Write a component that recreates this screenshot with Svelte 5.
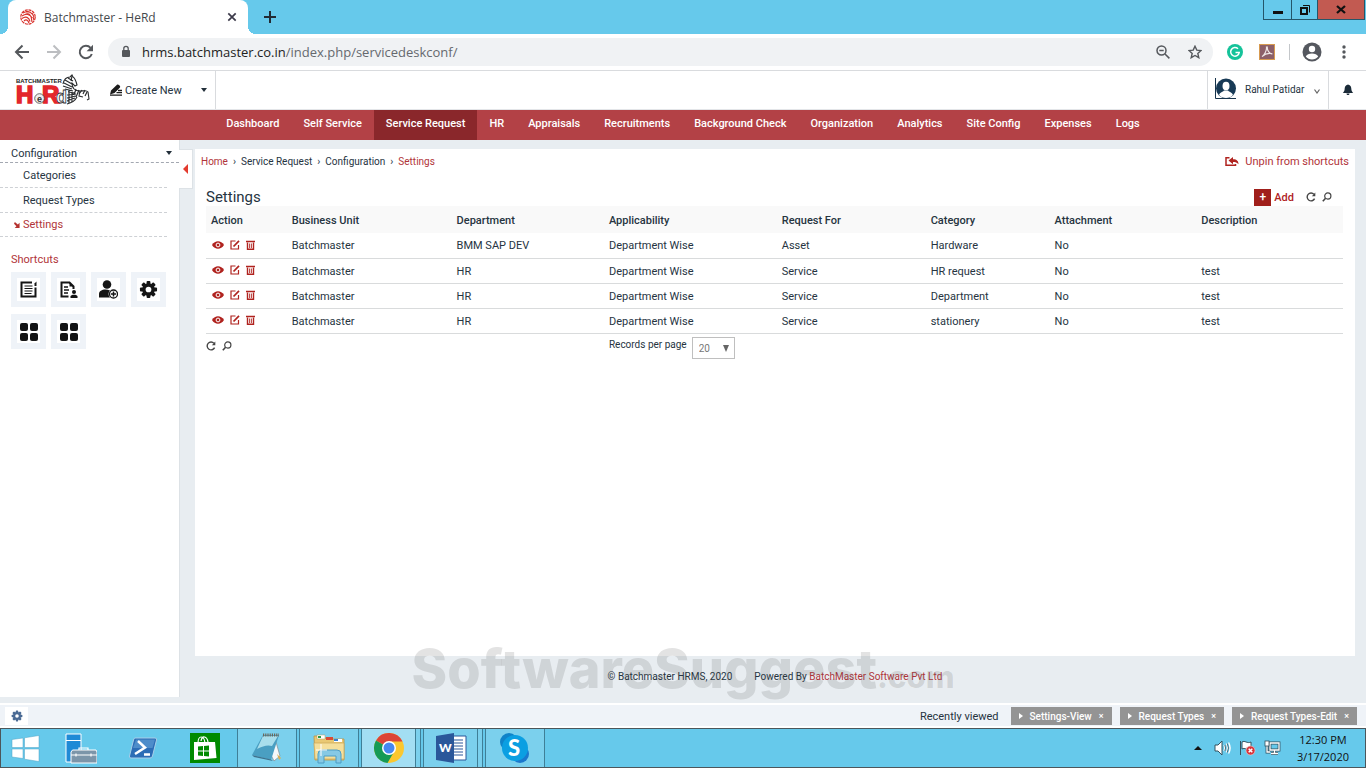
<script>
  let perPage = $state('20');

  const windowButtons = ['minimize', 'restore', 'close'];

  const navItems = [
    'Dashboard', 'Self Service', 'Service Request', 'HR', 'Appraisals', 'Recruitments',
    'Background Check', 'Organization', 'Analytics', 'Site Config', 'Expenses', 'Logs'
  ];

  const menuItems = ['Categories', 'Request Types', 'Settings'];

  const shortcuts = [
    { name: 'My request', icon: 'form' },
    { name: 'Employee report', icon: 'report' },
    { name: 'Add employee', icon: 'user' },
    { name: 'Configuration', icon: 'gear' },
    { name: 'Categories', icon: 'grid' },
    { name: 'Settings', icon: 'grid' }
  ];

  const columns = [
    { title: 'Action', width: 7.1 },
    { title: 'Business Unit', width: 14.5 },
    { title: 'Department', width: 13.4 },
    { title: 'Applicability', width: 15.2 },
    { title: 'Request For', width: 13.1 },
    { title: 'Category', width: 10.9 },
    { title: 'Attachment', width: 12.9 },
    { title: 'Description', width: 12.9 }
  ];

  const rows = [
    ['Batchmaster', 'BMM SAP DEV', 'Department Wise', 'Asset', 'Hardware', 'No', ''],
    ['Batchmaster', 'HR', 'Department Wise', 'Service', 'HR request', 'No', 'test'],
    ['Batchmaster', 'HR', 'Department Wise', 'Service', 'Department', 'No', 'test'],
    ['Batchmaster', 'HR', 'Department Wise', 'Service', 'stationery', 'No', 'test']
  ];

  const recent = ['Settings-View', 'Request Types', 'Request Types-Edit'];

  const tasks = [
    { name: 'start' },
    { name: 'server' },
    { name: 'powershell' },
    { name: 'store' },
    { name: 'notepad', open: true },
    { name: 'explorer', open: true },
    { name: 'chrome', open: true, active: true, stacked: true },
    { name: 'word', open: true, stacked: true },
    { name: 'skype', open: true }
  ];
</script>

{#snippet gear(size, color)}
  <svg width={size} height={size} viewBox="0 0 20 20">
    <g fill={color}>
      {#each [0, 45, 90, 135] as angle}
        <rect x="8" y="1" width="4" height="18" rx="1" transform="rotate({angle} 10 10)" />
      {/each}
      <circle cx="10" cy="10" r="6.6" />
    </g>
    <circle cx="10" cy="10" r="3" fill="#fff" />
  </svg>
{/snippet}

{#snippet refreshSearch()}
  <button class="plain" aria-label="Refresh">
    <svg width="10" height="10" viewBox="0 0 10 10" fill="none" stroke="#444" stroke-width="1.4">
      <path d="M8.6 6.6A3.9 3.9 0 1 1 8 2.400" />
      <path d="M9.300 .6v3.600H5.900z" fill="#444" stroke="none" />
    </svg>
  </button>
  <button class="plain" aria-label="Search">
    <svg width="10" height="10" viewBox="0 0 10 10" fill="none" stroke="#444" stroke-width="1.2">
      <circle cx="5.8" cy="4" r="3.1" />
      <path d="M3.6 6.2.8 9.2" stroke-width="1.6" />
    </svg>
  </button>
{/snippet}

<div class="screen">
  <div class="tabstrip">
    <div class="tab">
      <svg width="16" height="16" viewBox="0 0 16 16" fill="none" stroke="#d8322c" stroke-width="1.2">
        <circle cx="8" cy="8" r="7.2" stroke-dasharray="3 .8" />
        <path d="M3 4c3-2 7-2 9 1M2 7c4-3 8-2 10 2M2 9.5c4-3 7-1 8 3M4 12c2-2 4-1 5 2M12 4l2 4M13 8l1 3M6 2.5l5 1M11 7l1 6" />
        <path d="M5 5.5c2-1 4-.8 5 .3" />
      </svg>
      <span class="tab-title">Batchmaster - HeRd</span>
      <button class="plain" aria-label="Close tab">
        <svg width="10" height="10" viewBox="0 0 10 10" stroke="#3c3a4a" stroke-width="1.7"><path d="M1.3 1.3l7.4 7.4M8.7 1.3L1.3 8.7" /></svg>
      </button>
    </div>
    <button class="plain new-tab" aria-label="New tab">
      <svg width="12" height="12" viewBox="0 0 12 12" stroke="#222b33" stroke-width="2"><path d="M6 0v12M0 6h12" /></svg>
    </button>
    <div class="window-buttons">
      {#each windowButtons as name}
        <button class={name} aria-label={name}>
          <svg width="12" height="12" viewBox="0 0 12 12" fill="none" stroke="#111" stroke-width="2">
            {#if name === 'minimize'}
              <path d="M1 8.500h10" stroke-width="3" />
            {:else if name === 'restore'}
              <rect x="2" y="4" width="6" height="6" />
              <path d="M4 1.5h6.500v7" stroke-width="1" />
            {:else}
              <path d="M2 2l8 7M10 2l-8 7" stroke-width="2.300" />
            {/if}
          </svg>
        </button>
      {/each}
    </div>
  </div>

  <div class="toolbar">
    <button class="plain" aria-label="Back">
      <svg width="16" height="16" viewBox="0 0 16 16" fill="none" stroke="#55585c" stroke-width="2"><path d="M15 8H2M8.500 1.500L2 8l6.500 6.500" /></svg>
    </button>
    <button class="plain" aria-label="Forward">
      <svg width="16" height="16" viewBox="0 0 16 16" fill="none" stroke="#bcbec1" stroke-width="2"><path d="M1 8h13M7.500 1.500L14 8l-6.500 6.500" /></svg>
    </button>
    <button class="plain" aria-label="Reload">
      <svg width="16" height="16" viewBox="0 0 16 16" fill="none" stroke="#55585c" stroke-width="2">
        <path d="M13.800 10A6.200 6.200 0 1 1 12.600 3.800" />
        <path d="M15 .8v6.400H8.600z" fill="#55585c" stroke="none" />
      </svg>
    </button>
    <div class="address">
      <svg width="10" height="14" viewBox="0 0 10 14">
        <rect x="1" y="5" width="8" height="7" rx="1" fill="#55585c" />
        <path d="M2.800 5.500V3.500a2.200 2.200 0 0 1 4.400 0v2" fill="none" stroke="#55585c" stroke-width="1.300" />
      </svg>
      <span class="url">hrms.batchmaster.co.in<span>/index.php/servicedeskconf/</span></span>
      <svg width="14" height="14" viewBox="0 0 14 14" fill="none" stroke="#55585c" stroke-width="1.500">
        <circle cx="5.500" cy="5.500" r="4.500" /><path d="M3.300 5.500h4.400M9 9l4.400 4.400" />
      </svg>
      <svg width="14" height="14" viewBox="0 0 14 14" fill="none" stroke="#55585c" stroke-width="1.400">
        <path d="M7 1.200l1.800 3.900 4.200.4-3.200 2.900 1 4.300L7 10.500l-3.800 2.200 1-4.300L1 5.500l4.200-.4z" />
      </svg>
    </div>
    <div class="extensions">
      <svg width="16" height="16" viewBox="0 0 16 16">
        <circle cx="8" cy="8" r="8" fill="#15c39a" />
        <path d="M11 4.800A4.300 4.300 0 1 0 12.200 8.600H8.500" fill="none" stroke="#fff" stroke-width="1.500" />
      </svg>
      <svg width="16" height="16" viewBox="0 0 16 16">
        <rect x=".5" y=".5" width="15" height="15" fill="#8c6069" stroke="#d79a50" />
        <path d="M3 12.500c2-1 5-6 4.500-9.500h.8c-.3 3 2 7 5 6.800-3.500-1-7-.2-10.300 2.700z" fill="none" stroke="#eee6e6" stroke-width="1.200" />
      </svg>
      <span class="divider"></span>
      <svg width="20" height="20" viewBox="0 0 20 20">
        <circle cx="10" cy="10" r="9.500" fill="#55585f" />
        <circle cx="10" cy="7" r="3.200" fill="#fff" />
        <path d="M3.800 14.500c1.500-4 10.900-4 12.400 0-3 4-9.400 4-12.400 0z" fill="#fff" />
      </svg>
      <svg class="dots" width="4" height="14" viewBox="0 0 4 14" fill="#55585c"><circle cx="2" cy="2" r="1.700" /><circle cx="2" cy="7" r="1.700" /><circle cx="2" cy="12" r="1.700" /></svg>
    </div>
  </div>

  <header>
    <a class="logo" href="#home" aria-label="Batchmaster HeRd">
      <svg width="76" height="32" viewBox="0 0 76 32">
        <g font-family="'Liberation Sans', Arial, sans-serif" font-weight="bold">
          <text x="0" y="9" font-size="6" fill="#222">BATCHMASTER</text>
          <text x="0" y="29" font-size="24" fill="#e3262b" stroke="#e3262b" stroke-width="1.600">H</text>
          <text x="26" y="29" font-size="24" fill="#e3262b" stroke="#e3262b" stroke-width="1.600">R</text>
          <circle cx="23.500" cy="24.500" r="4.800" fill="#eee" stroke="#333" stroke-width=".7" />
          <text x="21" y="28" font-size="9" fill="#333">e</text>
          <text x="40" y="29" font-size="18" fill="#fff" stroke="#333" stroke-width=".8">d</text>
        </g>
        <g fill="none" stroke="#2b2d2f">
          <path d="M47 10c1-5 4-7 7-7l2-2 1 2c2 1 3 4 4 8l-2 1-3-3c0 5 3 8 8 8 4 0 7-1 8 1l1 7-2 1M64 17l-1 5 4 1M51 30c4-1 8-3 10-7" stroke-width="1.100" />
          <path d="M52 4l5 3M49 6l7 4M48 9l8 4M47 12l9 3M49 15l8 2M52 18l7 1M51 21l9-1M51 24l9-2M51 27l8-3M56 2l-1 5M60 15l-2 6M63 16l-3 7M66 16l-3 4M69 16l-2 4M71 18l-2 4M53 16v13M56 18v10" stroke-width="1.200" />
        </g>
      </svg>
    </a>
    <button class="create">
      <svg width="13" height="12" viewBox="0 0 13 12">
        <path d="M0 10.500l1-4L7 .7c1-1 4 1.200 3 2.700L4.500 9z" fill="#1c1c1c" />
        <path d="M8 6.500h4M6.500 8.700H12M0 11.200h12" stroke="#1c1c1c" stroke-width="1.300" />
      </svg>
      <span>Create New</span>
      <i class="caret"></i>
    </button>
    <button class="profile">
      <svg width="22" height="22" viewBox="0 0 22 22">
        <path d="M.5 0v20.500H21" fill="none" stroke="#16324a" />
        <circle cx="11" cy="10.500" r="10" fill="#183a56" />
        <ellipse cx="11" cy="8" rx="3.500" ry="4.300" fill="#fff" />
        <path d="M4 17c1-3 4-3 5-4.500h4c1 1.500 4 1.500 5 4.500-3 4-11 4-14 0z" fill="#fff" />
      </svg>
      <span>Rahul Patidar</span>
      <svg width="6" height="5" viewBox="0 0 6 5" fill="none" stroke="#666" stroke-width="1.200"><path d="M.5.5L3 4 5.500.5" /></svg>
    </button>
    <button class="bell" aria-label="Notifications">
      <svg width="12" height="12" viewBox="0 0 12 12" fill="#1b2b38">
        <path d="M6 .5c2.800.5 3.300 2.500 3.400 5 .1 1.500.8 2.300 1.800 3.500H.8C1.800 7.800 2.500 7 2.600 5.500 2.700 3 3.200 1 6 .5zM4.500 9.500h3c0 2-3 2-3 0z" />
      </svg>
    </button>
  </header>

  <nav class="main-nav">
    {#each navItems as item}
      <a href="#{item}" class:current={item === 'Service Request'}>{item}</a>
    {/each}
  </nav>

  <div class="body">
    <aside>
      <button class="menu-head">Configuration <i class="caret"></i></button>
      <ul>
        {#each menuItems as item}
          <li class:selected={item === 'Settings'}>
            {#if item === 'Settings'}
              <svg width="6" height="6" viewBox="0 0 7 7" fill="#b5322f"><path d="M1 0l3.500 3L6.500 1v6H.8l2-2L0 2z" /></svg>
            {/if}
            <a href="#{item}">{item}</a>
          </li>
        {/each}
      </ul>
      <h3>Shortcuts</h3>
      <div class="shortcuts">
        {#each shortcuts as shortcut}
          <button aria-label={shortcut.name}>
            {#if shortcut.icon === 'gear'}
              {@render gear(19, '#151515')}
            {:else}
              <svg width="19" height="19" viewBox="0 0 19 19" fill="none" stroke="#151515" stroke-width="2">
                {#if shortcut.icon === 'form'}
                  <path d="M13 2.500H2.500v14h14V7.500" />
                  <path d="M17.500 1.500v4.500h-2V3.500z" fill="#151515" stroke="none" />
                  <path d="M5.500 6h8M5.500 8.500h8M5.500 11h8M5.500 13.500h7" stroke-width="1.200" />
                {:else if shortcut.icon === 'report'}
                  <path d="M9.500 16.500h-7v-14h8l4 4V9" />
                  <path d="M10.500 2v4.500h4z" fill="#151515" stroke="none" />
                  <path d="M5 7h4M5 10h5M5 13h4" stroke-width="1.500" />
                  <circle cx="15" cy="12" r="2" fill="#151515" stroke="none" />
                  <path d="M11.500 18v-1.500c0-2.500 7-2.500 7 0V18z" fill="#151515" stroke="none" />
                {:else if shortcut.icon === 'user'}
                  <circle cx="8" cy="4.500" r="4.300" fill="#151515" stroke="none" />
                  <path d="M0 17.500V14c0-4 6-5.500 11-3.500-2 2-2 5 0 7z" fill="#151515" stroke="none" />
                  <circle cx="14.500" cy="14" r="4" fill="#fff" stroke-width="1.300" />
                  <path d="M14.500 11.500v5M12 14h5" stroke-width="1.500" />
                {:else}
                  <g fill="#151515" stroke="none">
                    <rect x="1" y="1" width="8" height="8" rx="2" /><rect x="11" y="1" width="8" height="8" rx="2" />
                    <rect x="1" y="11" width="8" height="8" rx="2" /><rect x="11" y="11" width="8" height="8" rx="2" />
                  </g>
                {/if}
              </svg>
            {/if}
          </button>
        {/each}
      </div>
      <button class="collapse" aria-label="Collapse menu"><i></i></button>
    </aside>

    <main>
      <section>
        <div class="crumb-row">
          <div class="crumbs">
            <a href="#home">Home</a><b>›</b><span>Service Request</span><b>›</b><span>Configuration</span><b>›</b><a href="#settings">Settings</a>
          </div>
          <a class="unpin" href="#unpin">
            <svg width="14" height="12" viewBox="0 0 14 12">
              <path d="M4.500 2.700H1v7.500h9.500V9" fill="none" stroke="#b0231f" stroke-width="1.500" />
              <path d="M3.500 5.500L8 2v2.200c4 0 5.500 2 5.500 5C12 7.500 10.500 7 8 7v2.200z" fill="#b0231f" />
            </svg>
            Unpin from shortcuts
          </a>
        </div>

        <div class="title-row">
          <h2>Settings</h2>
          <button class="add"><span>+</span>Add</button>
          {@render refreshSearch()}
        </div>

        <table>
          <colgroup>
            {#each columns as column}<col style="width: {column.width}%" />{/each}
          </colgroup>
          <thead>
            <tr>
              {#each columns as column}<th>{column.title}</th>{/each}
            </tr>
          </thead>
          <tbody>
            {#each rows as row}
              <tr>
                <td>
                  <div class="actions">
                    <button class="plain" aria-label="View">
                      <svg width="12" height="10" viewBox="0 0 12 10"><path d="M0 5c3-5 9-5 12 0-3 5-9 5-12 0z" fill="#b0231f" /><circle cx="6" cy="5" r="1.900" fill="none" stroke="#fff" /></svg>
                    </button>
                    <button class="plain" aria-label="Edit">
                      <svg width="10" height="10" viewBox="0 0 10 10" fill="none" stroke="#b0231f" stroke-width="1.200"><path d="M5.500 1H1v8h7.500V5" /><path d="M3.500 6.500L9 .8" stroke-width="1.700" /></svg>
                    </button>
                    <button class="plain" aria-label="Delete">
                      <svg width="9" height="10" viewBox="0 0 9 10" fill="none" stroke="#b0231f"><path d="M0 1.500h9" stroke-width="1.500" /><path d="M1.500 2.500v6.800h6V2.500" stroke-width="1.400" /><path d="M3.600 3.500V8M5.400 3.500V8" stroke-width=".9" /></svg>
                    </button>
                  </div>
                </td>
                {#each row as value}<td>{value}</td>{/each}
              </tr>
            {/each}
          </tbody>
          <tfoot>
            <tr>
              <td colspan="3"><div class="tools">{@render refreshSearch()}</div></td>
              <td colspan="5">
                <div class="pager">
                  <label for="per-page">Records per page</label>
                  <span class="select">
                    <select id="per-page" bind:value={perPage}>
                      <option>20</option>
                      <option>30</option>
                      <option>50</option>
                    </select>
                    <i></i>
                  </span>
                </div>
              </td>
            </tr>
          </tfoot>
        </table>
      </section>

      <footer>
        <span>© Batchmaster HRMS, 2020</span>
        <span>Powered By <a href="#company">BatchMaster Software Pvt Ltd</a></span>
      </footer>
    </main>

    <div class="watermark">SoftwareSuggest<small>.com</small></div>
  </div>

  <div class="recent">
    <button class="settings" aria-label="Settings">{@render gear(12, '#4a6a94')}</button>
    <span class="recent-label">Recently viewed</span>
    {#each recent as item}
      <a class="chip" href="#{item}"><i></i>{item}<small>×</small></a>
    {/each}
  </div>

  <div class="taskbar">
    {#each tasks as task}
      <button class="task" class:open={task.open} class:active={task.active} class:stacked={task.stacked} class:start={task.name === 'start'} aria-label={task.name}>
        <svg width="32" height="32" viewBox="0 0 32 32">
          {#if task.name === 'start'}
            <path d="M3 7.500L14 6v9.500H3zM15.500 5.800L30 3.500v12H15.500zM3 17h11v9.500L3 25zM15.500 17H30v12.500l-14.500-2.300z" fill="#fff" stroke="#4da3c4" stroke-width=".5" />
          {:else if task.name === 'server'}
            <path d="M1 2h15v28H1z" fill="#1f8ad6" stroke="#fff" /><path d="M1 8.500h15" stroke="#fff" />
            <path d="M6 20l1.500-2H31l1 2v11H6z" fill="#7c95a9" stroke="#fff" />
            <path d="M14 18v-2h9v2M6 23h26M11 21.500v3M26 21.500v3" fill="none" stroke="#fff" stroke-width="1.200" />
          {:else if task.name === 'powershell'}
            <path d="M8 6h20q2 0 1.500 2l-4 16q-.5 2-2.500 2H4q-2 0-1.500-2l4-16Q7 6 8 6z" fill="#2c6db6" stroke="#a9cfe9" />
            <path d="M9 7.500h19l-2.500 8.500H6z" fill="#5d9bd3" opacity=".7" />
            <path d="M11 9l7 6.500L8 22M17 22.500h6" fill="none" stroke="#fff" stroke-width="2.500" />
          {:else if task.name === 'store'}
            <path d="M1 1h30v30H1z" fill="#008a00" />
            <path d="M5 10h21l1.500 16L5 28z" fill="#fff" />
            <path d="M9 11c0-8 6-8 7 0M12 9c1-6 6-5 7 1" fill="none" stroke="#fff" stroke-width="1.200" />
            <path d="M9 14.500l5-.5v4.500H9zM15 14l5-.5v5h-5zM9 19.500h5V24l-5-.5zM15 19.500h5v5l-5-.5z" fill="#008a00" />
          {:else if task.name === 'notepad'}
            <path d="M23 3l6 21-6 5-3-6z" fill="#f5f8fa" stroke="#7e8990" stroke-width=".7" />
            <path d="M12 3h16L20 28 1 23z" fill="#4a9fc2" />
            <path d="M12 4h15l-6 10q-6-2-15 3z" fill="#a8deec" />
            <path d="M1 23l19 4.500 2 1.500L3 25z" fill="#3f718c" />
            <path d="M12 3h16" stroke="#6d6658" stroke-width="3" stroke-dasharray="1.200 1" />
            <path d="M26 22l2 6 2-2z" fill="#dfb04f" />
          {:else if task.name === 'explorer'}
            <path d="M1 4h10l2 3h18v21H2z" fill="#e9c873" stroke="#bb9447" stroke-width=".8" />
            <path d="M4 3h8v4H4z" fill="#fff" stroke="#bc9e58" stroke-width=".5" /><path d="M5 4h3v2H5z" fill="#2c9a4c" />
            <path d="M13 5h7v3h-7z" fill="#d94b34" /><path d="M21 7h8v3h-8z" fill="#fff" /><path d="M21 7h4v2h-4z" fill="#3b80d0" />
            <path d="M1 11h30v16H2z" fill="#f5df9b" stroke="#cba858" stroke-width=".7" />
            <path d="M5 31v-9q0-4 4-4h15q4 0 4 4v9h-5v-7H11v7z" fill="#86c9e5" stroke="#4d9dc5" />
            <path d="M8 12v12M3 18h11" stroke="#fff" />
          {:else if task.name === 'chrome'}
            <circle cx="16" cy="16" r="15" fill="#fbc72f" />
            <path d="M16 16L3 8.500A15 15 0 0 1 29.500 9.500H16z" fill="#dc4437" />
            <path d="M16 16L3 8.500A15 15 0 0 0 14.500 31l7-12z" fill="#159a56" />
            <circle cx="16" cy="16" r="7" fill="#fff" /><circle cx="16" cy="16" r="5.500" fill="#4688f1" />
          {:else if task.name === 'word'}
            <path d="M16 4h15v24H16z" fill="#fff" stroke="#2a579a" />
            <path d="M18 8h10M18 11h10M18 14h10M18 17h10M18 20h10M18 23h10" stroke="#2a579a" />
            <path d="M1 4l18-3v30L1 28z" fill="#2a579a" />
            <text x="4" y="20" font-family="Lato, sans-serif" font-size="12" font-weight="900" fill="#fff">W</text>
          {:else}
            <circle cx="10" cy="10" r="9" fill="#0f83c9" /><circle cx="21" cy="22" r="9" fill="#1b78cd" />
            <circle cx="16" cy="16" r="13" fill="#0b9fe2" />
            <text x="9" y="24" font-family="Lato, sans-serif" font-size="22" font-weight="900" fill="#fff">S</text>
          {/if}
        </svg>
      </button>
    {/each}
    <div class="tray">
      <svg width="8" height="4" viewBox="0 0 8 4"><path d="M0 4l4-4 4 4z" fill="#111" /></svg>
      <svg width="17" height="16" viewBox="0 0 17 16" fill="none" stroke="#35525f">
        <path d="M1 5h3l4-4v14l-4-4H1z" fill="#fff" /><path d="M10 5q1.500 3 0 6M12.300 3.500q2.500 4.500 0 9M14.600 2.500q3 5.500 0 11" stroke="#fff" stroke-width="1.400" /><path d="M10.800 5q1.500 3 0 6M13.200 3.500q2.500 4.500 0 9" stroke-width=".8" />
      </svg>
      <svg width="17" height="16" viewBox="0 0 17 16">
        <path d="M1.500 1v14M3 2c3-2 5 2 9 0v7c-4 2-6-2-9 0z" fill="#fff" stroke="#35525f" />
        <circle cx="11.500" cy="10.500" r="4.500" fill="#d8333a" stroke="#f4d2d2" stroke-width=".6" /><path d="M9.700 8.700l3.600 3.600M13.300 8.700l-3.600 3.600" stroke="#fff" stroke-width="1.500" />
      </svg>
      <svg width="17" height="16" viewBox="0 0 17 16" fill="none">
        <path d="M6 3h9v7H6zM7 13.500h7M10.500 10v3.500M3 6v6h3" stroke="#35525f" stroke-width="2.800" /><path d="M6 3h9v7H6zM7 13.500h7M10.500 10v3.500M3 6v6h3" stroke="#fff" stroke-width="1.300" />
        <rect x="1" y="1" width="4" height="5" fill="#fff" stroke="#35525f" stroke-width=".8" />
      </svg>
      <div class="clock"><span>12:30 PM</span><span>3/17/2020</span></div>
    </div>
  </div>
</div>

<style>
  :global(body) {
    background: #e8edf1;
  }

  .screen {
    display: flex;
    flex-direction: column;
    min-height: 100vh;
    font-family: Roboto, sans-serif;
    font-size: 11px;
    color: #26343f;
  }

  .screen * {
    box-sizing: border-box;
  }

  svg {
    display: block;
    flex: none;
  }

  button {
    margin: 0;
    padding: 0;
    border: 0;
    background: none;
    font: inherit;
    color: inherit;
  }

  .plain {
    display: flex;
  }

  a {
    color: #b13439;
    text-decoration: none;
  }

  h2,
  h3 {
    margin: 0;
    font-weight: 400;
  }

  /* browser window */
  .tabstrip {
    display: flex;
    height: 34px;
    padding-left: 8px;
    background: #66c9eb;
  }

  .tab {
    position: relative;
    display: flex;
    align-items: center;
    gap: 8px;
    width: 240px;
    padding: 0 11px 0 12px;
    border-radius: 8px 8px 0 0;
    background: #fff;
    font-family: "Open Sans", sans-serif;
    font-size: 12px;
    color: #45494d;
  }

  .tab::before,
  .tab::after {
    content: "";
    position: absolute;
    bottom: 0;
    width: 8px;
    height: 8px;
  }

  .tab::before {
    left: -8px;
    background: radial-gradient(circle at 0 0, #66c9eb 8px, #fff 8px);
  }

  .tab::after {
    right: -8px;
    background: radial-gradient(circle at 100% 0, #66c9eb 8px, #fff 8px);
  }

  .tab-title {
    flex: 1;
  }

  .new-tab {
    align-self: center;
    margin-left: 16px;
  }

  .window-buttons {
    display: flex;
    height: 20px;
    margin-left: auto;
    margin-right: 1px;
    border: 1px solid #24566a;
    border-top: 0;
  }

  .window-buttons button {
    display: grid;
    place-items: center;
    width: 27px;
  }

  .window-buttons .restore {
    border: 1px solid #24566a;
    border-width: 0 1px;
  }

  .window-buttons .close {
    width: 46px;
    background: #c25a51;
  }

  .toolbar {
    display: flex;
    align-items: center;
    gap: 16px;
    height: 37px;
    padding: 0 20px 0 14px;
    border-bottom: 1px solid #d9dbde;
    background: #fff;
  }

  .address {
    display: flex;
    flex: 1;
    align-items: center;
    gap: 18px;
    height: 28px;
    margin: 0 -2px;
    padding: 0 11px 0 13px;
    border-radius: 14px;
    background: #f0f2f4;
  }

  .url {
    flex: 1;
    margin-left: -7px;
    font-family: "Open Sans", sans-serif;
    font-size: 13px;
    color: #222;
  }

  .url span {
    color: #65696e;
  }

  .extensions {
    display: flex;
    align-items: center;
    gap: 16px;
  }

  .divider {
    width: 1px;
    height: 16px;
    margin: 0 -4px 0 -2px;
    background: #c4c7ca;
  }

  .dots {
    margin-left: 4px;
  }

  /* application header */
  header {
    display: flex;
    height: 39px;
    background: #fff;
    border-bottom: 1px solid #e3e5e8;
  }

  .logo {
    padding: 3px 0 0 16px;
  }

  .logo svg {
    overflow: visible;
  }

  .create {
    display: flex;
    align-items: center;
    width: 124px;
    padding: 0 8px 0 18px;
    border-right: 1px solid #d9dbde;
    gap: 2px;
  }

  .create .caret {
    margin-left: auto;
  }

  .caret {
    border: 3px solid transparent;
    border-top: 4px solid #222f3a;
    border-bottom: 0;
  }

  .profile {
    display: flex;
    align-items: center;
    gap: 8px;
    width: 121px;
    margin-left: auto;
    padding: 0 8px 2px 7px;
    border-left: 1px solid #d9dbde;
    font-size: 10px;
    white-space: nowrap;
  }

  .profile svg:last-child {
    margin: 4px 0 0 auto;
  }

  .bell {
    display: grid;
    place-items: center;
    width: 38px;
    border-left: 1px solid #d9dbde;
  }

  .main-nav {
    display: flex;
    justify-content: center;
    height: 30px;
    background: #b34146;
  }

  .main-nav a {
    padding: 0 12px;
    font-weight: 500;
    line-height: 27px;
    color: #fff;
  }

  .main-nav .current {
    background: #8a272b;
  }

  .body {
    position: relative;
    display: flex;
    flex: 1;
    margin-bottom: 6px;
  }

  /* side menu */
  aside {
    position: relative;
    width: 180px;
    border-right: 1px solid #dde2e6;
    background: #fff;
  }

  .menu-head {
    display: flex;
    align-items: center;
    justify-content: space-between;
    width: 100%;
    height: 23px;
    padding: 4px 7px 0 11px;
    border-bottom: 1px dashed #a3a8b1;
  }

  ul {
    margin: 0 12px 0 0;
    padding: 0;
    list-style: none;
  }

  li {
    display: flex;
    align-items: center;
    height: 25px;
    padding-left: 23px;
    border-bottom: 1px dashed #ced1d5;
  }

  li.selected {
    height: 24px;
    padding-left: 14px;
    gap: 3px;
  }

  li a {
    color: #26343f;
  }

  li.selected a,
  h3 {
    color: #b13439;
  }

  h3 {
    padding: 16px 0 0 11px;
    font-size: 11px;
    line-height: 14px;
  }

  .shortcuts {
    display: grid;
    grid-template-columns: repeat(4, 35px);
    gap: 7px 5px;
    padding: 5px 0 0 11px;
  }

  .shortcuts button {
    display: grid;
    place-items: center;
    height: 35px;
    border: 6px solid #eff3f8;
  }

  .collapse {
    position: absolute;
    top: 9px;
    left: 179px;
    display: grid;
    place-items: center;
    width: 14px;
    height: 40px;
    border: 1px solid #dde2e6;
    border-left: 0;
    background: #fff;
  }

  .collapse i {
    border: 5px solid transparent;
    border-right: 5px solid #e33b2e;
    border-left: 0;
  }

  /* content */
  main {
    display: flex;
    flex: 1;
    flex-direction: column;
    padding: 9px 11px 0 15px;
  }

  section {
    flex: 1;
    padding: 0 12px 0 11px;
    background: #fff;
  }

  .crumb-row {
    display: flex;
    align-items: center;
    justify-content: space-between;
    height: 24px;
    margin: 0 -6px 0 -5px;
  }

  .crumbs {
    font-size: 10px;
  }

  .crumbs b {
    margin: 0 5px;
    font-weight: 400;
  }

  .unpin {
    display: flex;
    align-items: center;
    gap: 6px;
  }

  .title-row {
    display: flex;
    align-items: center;
    gap: 6px;
    padding: 15px 11px 0 0;
  }

  h2 {
    flex: 1;
    font-size: 15px;
    line-height: 18px;
  }

  .add {
    display: flex;
    align-items: center;
    gap: 3px;
    margin-right: 6px;
    font-weight: 500;
    color: #b0231f;
  }

  .add span {
    width: 17px;
    line-height: 17px;
    background: #a01f1b;
    font-size: 12px;
    color: #fff;
  }

  table {
    width: 100%;
    table-layout: fixed;
    border-collapse: collapse;
    text-align: left;
  }

  th {
    height: 27px;
    padding: 1px 5px 0;
    background: #f9f9f9;
    font-weight: 500;
  }

  td {
    height: 25px;
    padding: 1px 5px 0;
  }

  tbody tr {
    border-bottom: 1px solid #d9dbdc;
  }

  .actions {
    display: flex;
    align-items: center;
    gap: 6px;
    padding: 0 0 2px 1px;
  }

  tfoot td {
    padding-top: 0;
    vertical-align: top;
  }

  .tools {
    display: flex;
    gap: 6px;
    margin-left: -5px;
    padding-top: 7px;
  }

  .pager {
    display: flex;
    gap: 5px;
    font-size: 10px;
    line-height: 22px;
  }

  .select {
    position: relative;
    margin-top: 3px;
  }

  select {
    display: block;
    width: 43px;
    height: 22px;
    padding: 0 6px;
    border: 1px solid #bfbfbf;
    border-radius: 0;
    background: #fff;
    appearance: none;
    font: inherit;
    color: #777;
  }

  .select i {
    position: absolute;
    top: 8px;
    right: 6px;
    border: 3px solid transparent;
    border-top: 7px solid #666;
    border-bottom: 0;
  }

  footer {
    display: flex;
    align-items: center;
    justify-content: center;
    gap: 22px;
    height: 41px;
    font-size: 10px;
  }

  .watermark {
    position: absolute;
    left: 0;
    right: 0;
    bottom: -10px;
    font-size: 54px;
    font-weight: 800;
    font-family: Inter, sans-serif;
    line-height: 60px;
    text-align: center;
    color: rgba(80, 80, 80, 0.16);
    pointer-events: none;
  }

  .watermark small {
    font-size: 31px;
  }

  /* recently viewed bar */
  .recent {
    display: flex;
    align-items: center;
    gap: 8px;
    height: 25px;
    padding: 1px 9px 0 5px;
    border: 2px solid #fff;
    border-right: 0;
    border-left: 0;
    background: #eff3f8;
  }

  .settings {
    display: grid;
    place-items: center;
    width: 23px;
    height: 18px;
    background: #fff;
  }

  .recent-label {
    margin: 0 4px 0 auto;
  }

  .chip {
    display: flex;
    align-items: center;
    height: 18px;
    padding: 0 8px;
    background: #949494;
    font-size: 10px;
    font-weight: 500;
    color: #fff;
  }

  .chip i {
    margin-right: 7px;
    border: 3px solid transparent;
    border-left: 4px solid #fff;
    border-right: 0;
  }

  .chip small {
    margin-left: 7px;
    font-size: 9px;
  }

  /* taskbar */
  .taskbar {
    display: flex;
    height: 40px;
    gap: 2px;
    border: 1px solid #4c565b;
    background: #66c9eb;
  }

  .task {
    position: relative;
    display: grid;
    place-items: center;
    width: 60px;
  }

  .task.start {
    width: 48px;
  }

  .task.open {
    border: 1px solid #3f7f97;
    border-width: 0 1px;
    background: #7bd0ed;
  }

  .task.active {
    background: #a3def3;
  }

  .task.stacked {
    padding-right: 5px;
    box-shadow: inset -4px 0 #7bd0ed, inset -5px 0 #3f7f97;
  }

  .tray {
    display: flex;
    align-items: center;
    gap: 8px;
    margin-left: auto;
    padding-right: 16px;
  }

  .tray svg:first-child {
    margin-right: 4px;
  }

  .clock {
    display: flex;
    flex-direction: column;
    margin-left: 8px;
    font-family: "Open Sans", sans-serif;
    font-size: 11px;
    line-height: 17px;
    text-align: center;
    color: #111;
  }
</style>
